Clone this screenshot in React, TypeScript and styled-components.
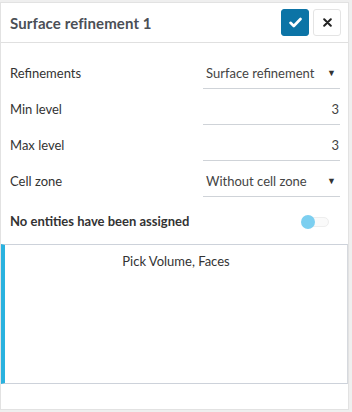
import React from "react";
import styled, { createGlobalStyle } from "styled-components";

const Global = createGlobalStyle`
  html, body { margin: 0; padding: 0; background: #efefef; }
  body { font-family: Lato, "Open Sans", "Liberation Sans", sans-serif; }
  * { box-sizing: border-box; }
`;

const Page = styled.div`
  padding-top: 2px;
  width: 352px;
  height: 412px;
`;

const Panel = styled.div`
  width: 349px;
  height: 408px;
  background: #fff;
  border: 1px solid #e2e2e2;
  display: flex;
  flex-direction: column;
`;

const Header = styled.div`
  height: 40px;
  display: flex;
  align-items: center;
  padding: 0 7px 0 9px;
  border-bottom: 1px solid #e0e0e0;
`;

const Title = styled.div`
  flex: 1;
  font-size: 15px;
  font-weight: 700;
  color: #4b4f56;
  letter-spacing: 0.1px;
`;

const IconButton = styled.button<{ $primary?: boolean }>`
  width: 28px;
  height: 27px;
  margin-left: 4px;
  border-radius: 3px;
  border: 1px solid ${(p) => (p.$primary ? "#0c74a6" : "#e4e4e4")};
  background: ${(p) => (p.$primary ? "#0c74a6" : "#fff")};
  display: flex;
  align-items: center;
  justify-content: center;
  padding: 0;
`;

const Body = styled.div`
  padding: 10px 8px 0 9px;
`;

const Row = styled.div`
  height: 36px;
  padding-top: 4px;
  display: flex;
  align-items: center;
  justify-content: space-between;
`;

const Label = styled.div`
  font-size: 13px;
  color: #333;
`;

const Field = styled.div<{ $align?: "left" | "right" }>`
  width: 137px;
  height: 32px;
  border-bottom: 1px solid #cfd3d8;
  display: flex;
  align-items: center;
  justify-content: ${(p) => (p.$align === "right" ? "flex-end" : "space-between")};
  padding: 0 1px 0 3px;
  font-size: 13px;
  color: #444;
`;

const Arrow = styled.span`
  font-size: 9px;
  color: #333;
  margin-right: 3px;
`;

const EntityRow = styled.div`
  height: 32px;
  margin-top: 8px;
  display: flex;
  align-items: center;
  justify-content: space-between;
`;

const Bold = styled.div`
  font-size: 13px;
  font-weight: 700;
  color: #333;
`;

const Toggle = styled.div`
  position: relative;
  width: 28px;
  height: 14px;
  margin-right: 11px;
  margin-top: 1px;
`;

const Track = styled.div`
  position: absolute;
  left: 6px;
  top: 2px;
  width: 22px;
  height: 10px;
  border-radius: 5px;
  border: 1px solid #eee;
  background: #fafafa;
`;

const Knob = styled.div`
  position: absolute;
  left: 0;
  top: 0;
  width: 14px;
  height: 14px;
  border-radius: 50%;
  background: #7ccff0;
`;

const PickBox = styled.div`
  margin-top: 7px;
  height: 140px;
  border-top: 1px solid #cdd2da;
  border-bottom: 1px solid #cdd2da;
  border-right: 1px solid #d6d9de;
  border-left: 4px solid #2ab2df;
  padding-top: 8px;
  text-align: center;
  font-size: 13px;
  color: #333;
`;

const Check = () => (
  <svg width="13" height="11" viewBox="0 0 13 11">
    <path d="M1.5 5.8 L4.8 9 L11.5 2" stroke="#fff" strokeWidth="2.6" fill="none" strokeLinecap="round" strokeLinejoin="round" />
  </svg>
);

const Close = () => (
  <svg width="9" height="9" viewBox="0 0 9 9">
    <path d="M1.2 1.2 L7.8 7.8 M7.8 1.2 L1.2 7.8" stroke="#222" strokeWidth="2" strokeLinecap="round" />
  </svg>
);

export default function App() {
  return (
    <Page>
      <Global />
      <Panel>
        <Header>
          <Title>Surface refinement 1</Title>
          <IconButton $primary>
            <Check />
          </IconButton>
          <IconButton>
            <Close />
          </IconButton>
        </Header>
        <Body>
          <Row>
            <Label>Refinements</Label>
            <Field>
              <span>Surface refinement</span>
              <Arrow>▼</Arrow>
            </Field>
          </Row>
          <Row>
            <Label>Min level</Label>
            <Field $align="right">3</Field>
          </Row>
          <Row>
            <Label>Max level</Label>
            <Field $align="right">3</Field>
          </Row>
          <Row>
            <Label>Cell zone</Label>
            <Field>
              <span>Without cell zone</span>
              <Arrow>▼</Arrow>
            </Field>
          </Row>
          <EntityRow>
            <Bold>No entities have been assigned</Bold>
            <Toggle>
              <Track />
              <Knob />
            </Toggle>
          </EntityRow>
        </Body>
        <PickBox>Pick Volume, Faces</PickBox>
      </Panel>
    </Page>
  );
}
